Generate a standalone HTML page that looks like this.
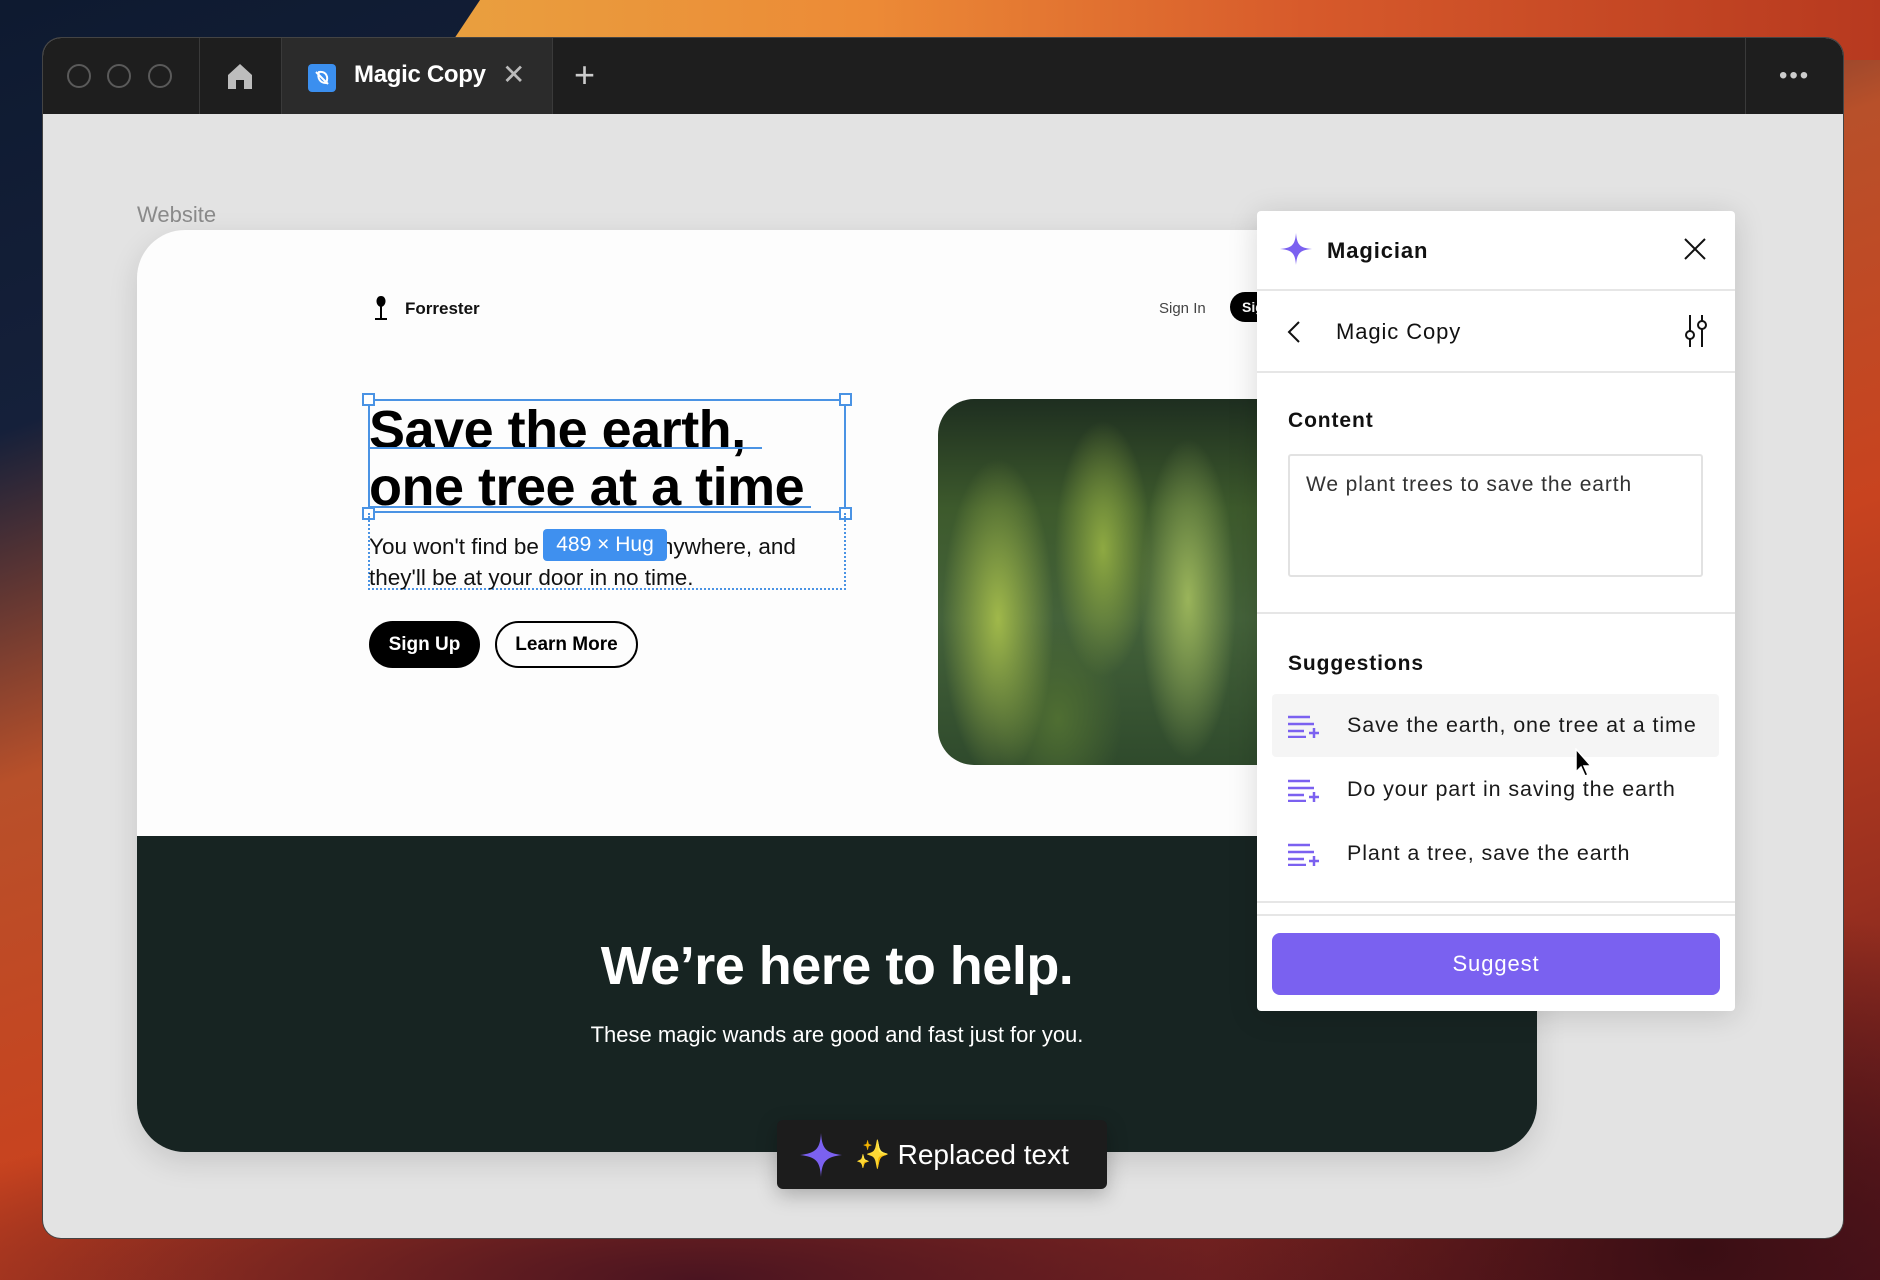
<!DOCTYPE html>
<html><head><meta charset="utf-8"><style>
*{margin:0;padding:0;box-sizing:border-box}
body{width:1880px;height:1280px;overflow:hidden;position:relative;font-family:"Liberation Sans",sans-serif;
background:
radial-gradient(ellipse 700px 500px at 1700px 1250px,#3a0e14 0%,rgba(58,14,20,0) 70%),
radial-gradient(ellipse 1200px 250px at 700px 1280px,#4a1420 0%,rgba(74,20,32,0) 75%),
linear-gradient(160deg,#0e1a30 0%,#15203a 22%,#b8502a 40%,#c8431f 60%,#9a301f 80%,#5a1520 100%);}
.wallTop{position:absolute;left:440px;top:0;width:1440px;height:60px;background:linear-gradient(90deg,#e9a03f,#ec8a36 30%,#d75a2b 60%,#b7391f 100%);clip-path:polygon(40px 0,100% 0,100% 100%,0 100%)}
.win{position:absolute;left:43px;top:38px;width:1800px;height:1200px;border-radius:18px;overflow:hidden;background:#e3e3e3;box-shadow:0 0 0 1px #444}
.bar{position:absolute;left:0;top:0;width:100%;height:76px;background:#1e1e1e}
.circ{position:absolute;top:64px;width:24px;height:24px;border-radius:50%;border:2px solid #5a5a5a}
.div{position:absolute;top:38px;width:1px;height:76px;background:#3a3a3a}
.abs{position:absolute}
.panel{position:absolute;left:1257px;top:211px;width:478px;height:800px;background:#fff;border-radius:4px;box-shadow:0 4px 30px rgba(0,0,0,.15);font-family:"Liberation Sans",sans-serif;color:#111;letter-spacing:.9px}
.hr{position:absolute;left:0;width:100%;height:2px;background:#e6e6e6}
.sg{position:absolute;left:15px;width:447px;height:63px;display:flex;align-items:center;font-size:21.5px;color:#1a1a1a}
.sg svg{margin-left:16px;margin-right:27px}
</style></head><body>
<div class="wallTop"></div>
<div class="win">
 <div class="bar"></div>
 <div class="abs" style="left:238px;top:0;width:271px;height:76px;background:#2b2b2b"></div>
</div>
<div class="circ" style="left:67px"></div><div class="circ" style="left:107px"></div><div class="circ" style="left:148px"></div>
<div class="div" style="left:199px"></div><div class="div" style="left:281px"></div><div class="div" style="left:552px"></div><div class="div" style="left:1745px"></div>
<svg class="abs" style="left:227px;top:63px" width="26" height="26" viewBox="0 0 26 26"><path d="M13 1 L25 12 V26 H17 V17 H9 V26 H1 V12 Z" fill="#bdbdbd"/></svg>
<div class="abs" style="left:308px;top:64px;width:28px;height:28px;background:#3b8fef;border-radius:4px"></div>
<svg class="abs" style="left:312px;top:68px" width="20" height="20" viewBox="0 0 20 20" fill="none" stroke="#fff" stroke-width="2"><path d="M4 4 L16 16 M7 4 C14 3 17 9 14 15 C8 15 5 10 7 4 Z"/></svg>
<div class="abs" style="left:354px;top:61px;font-size:24px;color:#fff;font-weight:bold;letter-spacing:-.3px">Magic Copy</div>
<div class="abs" style="left:502px;top:58px;font-size:28px;color:#bbb">✕</div>
<div class="abs" style="left:574px;top:54px;font-size:36px;color:#ccc">+</div>
<div class="abs" style="left:1779px;top:66px;font-size:24px;color:#ccc;letter-spacing:2px;line-height:20px">•••</div>

<div class="abs" style="left:137px;top:202px;font-size:22px;color:#8a8a8a">Website</div>
<div class="abs" style="left:137px;top:230px;width:1400px;height:922px;border-radius:48px;overflow:hidden;background:#fdfdfd;box-shadow:0 10px 30px rgba(0,0,0,.12)">
 <div class="abs" style="left:0;top:606px;width:100%;height:316px;background:#172422"></div>
</div>
<svg class="abs" style="left:372px;top:295px" width="18" height="26" viewBox="0 0 18 26"><path d="M9 1 C3 1 3 11 9 12 C15 11 15 1 9 1Z" fill="#000"/><path d="M9 6 V24 M3 24 H15" stroke="#000" stroke-width="2"/></svg>
<div class="abs" style="left:405px;top:299px;font-size:17px;font-weight:bold;color:#111">Forrester</div>
<div class="abs" style="left:1159px;top:300px;font-size:15px;color:#444">Sign In</div>
<div class="abs" style="left:1230px;top:292px;width:60px;height:30px;border-radius:15px;background:#000"></div>
<div class="abs" style="left:1242px;top:299px;font-size:14px;color:#fff;font-weight:bold">Sig</div>

<div class="abs" style="left:369px;top:402px;font-size:54px;font-weight:bold;line-height:57px;color:#000;letter-spacing:-.5px">Save the earth,<br>one tree at a time</div>
<div class="abs" style="left:368px;top:399px;width:478px;height:114px;border:2px solid #4a93e4"></div>
<div class="abs" style="left:368px;top:447px;width:394px;height:2px;background:#4a93e4"></div>
<div class="abs" style="left:368px;top:506px;width:443px;height:2px;background:#4a93e4"></div>
<div class="abs" style="left:362px;top:393px;width:13px;height:13px;background:#fff;border:2px solid #4a93e4"></div>
<div class="abs" style="left:839px;top:393px;width:13px;height:13px;background:#fff;border:2px solid #4a93e4"></div>
<div class="abs" style="left:362px;top:507px;width:13px;height:13px;background:#fff;border:2px solid #4a93e4"></div>
<div class="abs" style="left:839px;top:507px;width:13px;height:13px;background:#fff;border:2px solid #4a93e4"></div>
<div class="abs" style="left:368px;top:513px;width:478px;height:77px;border:2px dotted #4a93e4;border-top:none"></div>
<div class="abs" style="left:369px;top:531px;font-size:22.5px;line-height:31px;color:#111">You won't find be<span style="display:inline-block;width:122px"></span>nywhere, and<br>they'll be at your door in no time.</div>
<div class="abs" style="left:543px;top:529px;width:124px;height:32px;background:#3f90ef;border-radius:4px;color:#fff;font-size:21px;text-align:center;line-height:32px">489 × Hug</div>
<div class="abs" style="left:369px;top:621px;width:111px;height:47px;border-radius:24px;background:#000;color:#fff;font-weight:bold;font-size:19px;text-align:center;line-height:47px">Sign Up</div>
<div class="abs" style="left:495px;top:621px;width:143px;height:47px;border-radius:24px;border:2px solid #000;color:#000;font-weight:bold;font-size:19px;text-align:center;line-height:43px">Learn More</div>
<div class="abs" style="left:938px;top:399px;width:330px;height:366px;border-radius:36px 0 0 36px;overflow:hidden;background:
radial-gradient(ellipse 70px 200px at 60px 220px,#a0b84a,rgba(110,140,50,0) 80%),
radial-gradient(ellipse 60px 160px at 165px 150px,#8ea942,rgba(110,140,50,0) 80%),
radial-gradient(ellipse 60px 200px at 250px 200px,#9ab45a,rgba(110,140,50,0) 80%),
radial-gradient(ellipse 80px 120px at 120px 320px,#4f6e32,rgba(60,80,40,0) 80%),
linear-gradient(180deg,#1e2e20 0%,#3d5a2c 30%,#44623a 60%,#2f4a2c 100%)"></div>

<div class="abs" style="left:137px;top:935px;width:1400px;text-align:center;font-size:54px;font-weight:bold;color:#fff;letter-spacing:-.5px">We’re here to help.</div>
<div class="abs" style="left:137px;top:1022px;width:1400px;text-align:center;font-size:22px;color:#fff">These magic wands are good and fast just for you.</div>

<div class="abs" style="left:777px;top:1120px;width:330px;height:69px;background:#1c1c1c;border-radius:6px;box-shadow:0 6px 20px rgba(0,0,0,.25)"></div>
<svg class="abs" style="left:800px;top:1133px" width="42" height="44" viewBox="0 0 42 44"><path d="M21 0 C22 16 26 20 42 22 C26 24 22 28 21 44 C20 28 16 24 0 22 C16 20 20 16 21 0Z" fill="#7b61f0"/></svg>
<div class="abs" style="left:855px;top:1138px;font-size:28px;color:#fff">✨ Replaced text</div>

<div class="panel">
 <svg class="abs" style="left:23px;top:22px" width="32" height="32" viewBox="0 0 32 32"><path d="M16 0 C17 12 20 15 32 16 C20 17 17 20 16 32 C15 20 12 17 0 16 C12 15 15 12 16 0Z" fill="#7b61f0"/></svg>
 <div class="abs" style="left:70px;top:27px;font-size:22px;font-weight:bold">Magician</div>
 <svg class="abs" style="left:427px;top:27px" width="22" height="22" viewBox="0 0 22 22" stroke="#111" stroke-width="2"><path d="M1 1 L21 21 M21 1 L1 21"/></svg>
 <div class="hr" style="top:78px"></div>
 <svg class="abs" style="left:30px;top:109px" width="14" height="24" viewBox="0 0 14 24" fill="none" stroke="#111" stroke-width="2"><path d="M12 2 L2 12 L12 22"/></svg>
 <div class="abs" style="left:79px;top:108px;font-size:22px">Magic Copy</div>
 <svg class="abs" style="left:425px;top:104px" width="28" height="32" viewBox="0 0 28 32" fill="none" stroke="#111" stroke-width="2"><path d="M8 0 V16 M8 24 V32 M20 0 V6 M20 14 V32"/><circle cx="8" cy="20" r="4"/><circle cx="20" cy="10" r="4"/></svg>
 <div class="hr" style="top:160px"></div>
 <div class="abs" style="left:31px;top:198px;font-size:21px;font-weight:bold">Content</div>
 <div class="abs" style="left:31px;top:243px;width:415px;height:123px;border:2px solid #e2e2e2;border-radius:3px"></div>
 <div class="abs" style="left:49px;top:262px;font-size:21px;color:#333">We plant trees to save the earth</div>
 <div class="hr" style="top:401px"></div>
 <div class="abs" style="left:31px;top:441px;font-size:21px;font-weight:bold">Suggestions</div>
 <div class="sg" style="top:483px;background:#f5f5f5;border-radius:4px">
  <svg width="32" height="24" viewBox="0 0 32 24" fill="none" stroke="#7b61f0" stroke-width="2.5"><path d="M0 3 H22 M0 10 H26 M0 17 H16 M0 23 H18"/><path d="M26 14 V24 M21 19 H31"/></svg>Save the earth, one tree at a time</div>
 <div class="sg" style="top:547px">
  <svg width="32" height="24" viewBox="0 0 32 24" fill="none" stroke="#7b61f0" stroke-width="2.5"><path d="M0 3 H22 M0 10 H26 M0 17 H16 M0 23 H18"/><path d="M26 14 V24 M21 19 H31"/></svg>Do your part in saving the earth</div>
 <div class="sg" style="top:611px">
  <svg width="32" height="24" viewBox="0 0 32 24" fill="none" stroke="#7b61f0" stroke-width="2.5"><path d="M0 3 H22 M0 10 H26 M0 17 H16 M0 23 H18"/><path d="M26 14 V24 M21 19 H31"/></svg>Plant a tree, save the earth</div>
 <div class="hr" style="top:690px"></div>
 <div class="hr" style="top:703px"></div>
 <div class="abs" style="left:15px;top:722px;width:448px;height:62px;background:#7a61f0;border-radius:8px;color:#fff;font-size:22px;text-align:center;line-height:62px">Suggest</div>
</div>
<svg class="abs" style="left:1574px;top:748px" width="20" height="30" viewBox="0 0 20 30"><path d="M2 1 V24 L7 19 L11 28 L14 27 L10 18 L17 18 Z" fill="#000" stroke="#fff" stroke-width="1.5"/></svg>
</body></html>
